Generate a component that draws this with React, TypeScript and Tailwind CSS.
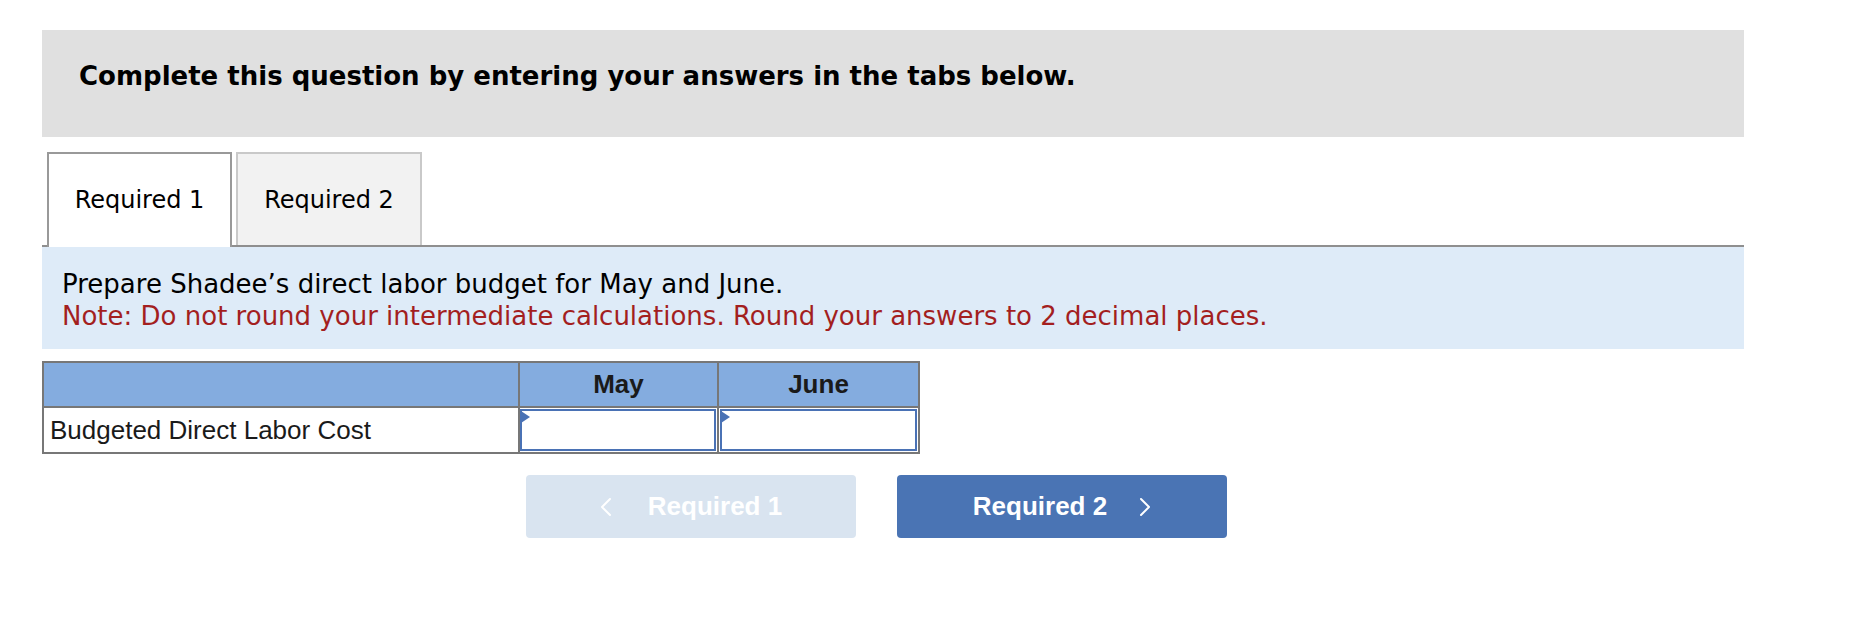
import React from 'react';

const verdana = { fontFamily: '"DejaVu Sans", Verdana, sans-serif' };

function Chevron({ dir }: { dir: 'left' | 'right' }) {
  return (
    <svg width="12" height="20" viewBox="0 0 12 20" fill="none" className="shrink-0">
      <polyline
        points={dir === 'left' ? '10,2 2,10 10,18' : '2,2 10,10 2,18'}
        stroke="white"
        strokeWidth="2"
        strokeLinecap="round"
        strokeLinejoin="round"
      />
    </svg>
  );
}

function AnswerCell() {
  return (
    <div className="relative h-full w-full py-[1px] pr-[1px]">
      <input className="h-full w-full border-2 border-[#4a72b5] bg-white outline-none" />
      {/* entry marker */}
      <span className="pointer-events-none absolute left-[1px] top-[3px] h-0 w-0 border-y-[6px] border-l-[9px] border-y-transparent border-l-[#4a72b5]" />
    </div>
  );
}

export default function App() {
  return (
    <div className="min-h-screen bg-white pl-[42px] pt-[30px]">
      <div className="w-[1702px]">
        {/* Instructions */}
        <div className="h-[107px] bg-[#e0e0e0] pl-[37px] pt-[33px]">
          <p className="text-[26px] font-bold leading-[26px] text-black" style={verdana}>
            Complete this question by entering your answers in the tabs below.
          </p>
        </div>

        {/* Tabs */}
        <div className="mt-[15px] flex h-[95px] items-start gap-[4px] border-b-2 border-[#8f8f8f] pl-[5px]" style={verdana}>
          <div className="relative z-10 -mb-[2px] h-[95px] w-[185px] border-2 border-b-0 border-[#999999] bg-white pt-[33px] text-center text-[24px] leading-[26px] text-black">
            Required 1
          </div>
          <div className="h-[93px] w-[186px] border-2 border-b-0 border-[#c9c9c9] bg-[#f2f2f2] pt-[33px] text-center text-[24px] leading-[26px] text-black">
            Required 2
          </div>
        </div>

        {/* Prompt */}
        <div className="h-[102px] bg-[#deebf8] pl-[20px] pt-[21px] text-[26px] leading-[32px]" style={verdana}>
          <p className="text-black">Prepare Shadee’s direct labor budget for May and June.</p>
          <p className="text-[#a31f1f]">Note: Do not round your intermediate calculations. Round your answers to 2 decimal places.</p>
        </div>

        {/* Budget table */}
        <div className="mt-[12px] w-[878px] border-2 border-[#777777] font-['Liberation_Sans',Arial,sans-serif]">
          <div className="flex h-[45px] border-b-2 border-[#777777] bg-[#84acdf] text-[26px] font-bold text-[#1a1a1a]">
            <div className="w-[476px] border-r-2 border-[#777777]" />
            <div className="flex w-[199px] items-center justify-center border-r-2 border-[#777777]">May</div>
            <div className="flex flex-1 items-center justify-center">June</div>
          </div>
          <div className="flex h-[44px] text-[26px] text-[#1a1a1a]">
            <div className="flex w-[476px] items-center border-r-2 border-[#777777] pl-[6px]">
              Budgeted Direct Labor Cost
            </div>
            <div className="w-[199px] border-r-2 border-[#777777]">
              <AnswerCell />
            </div>
            <div className="flex-1 pl-[1px]">
              <AnswerCell />
            </div>
          </div>
        </div>

        {/* Navigation */}
        <div className="mt-[21px] flex gap-[41px] pl-[484px] font-['Liberation_Sans',Arial,sans-serif] text-[26px] font-bold text-white">
          <button className="flex h-[63px] w-[330px] items-center justify-center gap-[36px] rounded-[4px] bg-[#d9e4f0]">
            <Chevron dir="left" />
            <span>Required 1</span>
          </button>
          <button className="flex h-[63px] w-[330px] items-center justify-center gap-[32px] rounded-[4px] bg-[#4a74b4]">
            <span>Required 2</span>
            <Chevron dir="right" />
          </button>
        </div>
      </div>
    </div>
  );
}
